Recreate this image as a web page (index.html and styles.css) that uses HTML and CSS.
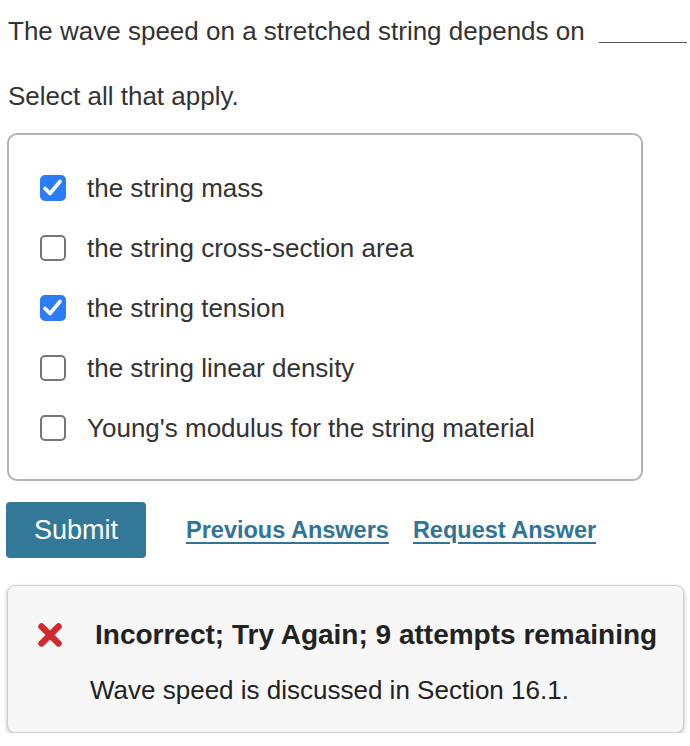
FILE: index.html
```html
<!DOCTYPE html>
<html lang="en">
<head>
    <meta charset="UTF-8">
    <meta name="viewport" content="width=device-width, initial-scale=1.0">
    <title>Wave speed question</title>
    <link rel="stylesheet" href="styles.css">
</head>
<body>

<div class="question">
    <p class="prompt">The wave speed on a stretched string depends on <span class="blank"></span></p>
    <p class="instructions">Select all that apply.</p>

    <div class="choices">
        <label class="choice">
            <span class="box checked">
                <svg viewBox="0 0 22 22" width="22" height="22"><path d="M3 11.5 L8 16.5 L18 4.5" fill="none" stroke="#fff" stroke-width="3.6" stroke-linecap="round" stroke-linejoin="round"/></svg>
            </span>
            <span class="choice-text">the string mass</span>
        </label>
        <label class="choice">
            <span class="box"></span>
            <span class="choice-text">the string cross-section area</span>
        </label>
        <label class="choice">
            <span class="box checked">
                <svg viewBox="0 0 22 22" width="22" height="22"><path d="M3 11.5 L8 16.5 L18 4.5" fill="none" stroke="#fff" stroke-width="3.6" stroke-linecap="round" stroke-linejoin="round"/></svg>
            </span>
            <span class="choice-text">the string tension</span>
        </label>
        <label class="choice">
            <span class="box"></span>
            <span class="choice-text">the string linear density</span>
        </label>
        <label class="choice">
            <span class="box"></span>
            <span class="choice-text">Young's modulus for the string material</span>
        </label>
    </div>

    <div class="actions">
        <button class="submit">Submit</button>
        <a href="#" class="link">Previous Answers</a>
        <a href="#" class="link">Request Answer</a>
    </div>

    <div class="feedback">
        <div class="feedback-title">
            <svg class="x-icon" viewBox="0 0 26 26" width="26" height="26"><path d="M4.5 4.5 L21.5 21.5 M21.5 4.5 L4.5 21.5" stroke="#d2292f" stroke-width="6.5" stroke-linecap="round"/></svg>
            <span>Incorrect; Try Again; 9 attempts remaining</span>
        </div>
        <p class="feedback-text">Wave speed is discussed in Section 16.1.</p>
    </div>
</div>

</body>
</html>
```

FILE: styles.css
```css
body {
    font-family: "Liberation Sans", Arial, Helvetica, sans-serif;
    color: #333;
    background-color: #fff;
    margin: 0;
    padding: 0;
}
.question {
    padding: 0 6px 0 7px;
}
.prompt {
    font-size: 26px;
    margin: 0;
    padding-top: 16px;
    padding-left: 1px;
    line-height: 30px;
    white-space: nowrap;
}
.blank {
    display: inline-block;
    width: 88px;
    margin-left: 7px;
    border-bottom: 1px solid #555;
    vertical-align: -3px;
}
.instructions {
    font-size: 26px;
    margin: 0;
    padding-top: 35px;
    padding-left: 1px;
    line-height: 30px;
}
.choices {
    width: 632px;
    margin-top: 22px;
    border: 2px solid #b3b3b3;
    border-radius: 10px;
    padding: 23px 0 21px 0;
}
.choice {
    display: flex;
    align-items: center;
    height: 60px;
    padding-left: 31px;
    cursor: pointer;
}
.box {
    display: flex;
    align-items: center;
    justify-content: center;
    box-sizing: border-box;
    width: 26px;
    height: 26px;
    border: 2px solid #767676;
    border-radius: 5px;
    background-color: #fff;
    flex-shrink: 0;
}
.box.checked {
    border-color: #2b7cf6;
    background-color: #2b7cf6;
}
.choice-text {
    font-size: 26px;
    margin-left: 21px;
    color: #333;
}
.actions {
    display: flex;
    align-items: center;
    margin-top: 21px;
    margin-left: -1px;
}
.submit {
    width: 140px;
    height: 56px;
    border: none;
    border-radius: 4px;
    background-color: #337898;
    color: #fff;
    font-family: inherit;
    font-size: 27px;
    cursor: pointer;
}
.link {
    font-size: 23.5px;
    font-weight: bold;
    color: #2f7597;
    text-decoration: underline;
    text-decoration-thickness: 2px;
    text-underline-offset: 4px;
    margin-left: 40px;
}
.link + .link {
    margin-left: 24px;
}
.feedback {
    margin-top: 27px;
    background-color: #f7f7f7;
    border: 1px solid #cfcfcf;
    border-radius: 8px;
    box-shadow: 0 2px 4px rgba(0, 0, 0, 0.25);
    padding: 33px 0 27px 29px;
}
.feedback-title {
    display: flex;
    align-items: center;
    font-size: 28px;
    line-height: 32px;
    font-weight: bold;
    color: #222;
}
.x-icon {
    margin-right: 32px;
    flex-shrink: 0;
}
.feedback-text {
    font-size: 26px;
    color: #222;
    margin: 24px 0 0 53px;
    line-height: 30px;
}
```
